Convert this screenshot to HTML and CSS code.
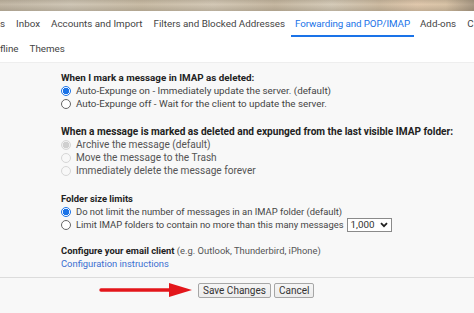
FILE: index.html
```html
<!DOCTYPE html>
<html lang="en">
<head>
  <meta charset="UTF-8" />
  <title>Settings - Forwarding and POP/IMAP</title>
  <link rel="stylesheet" href="styles.css">
</head>
<body>

  <!-- Blurred theme photo -->
  <div class="photo"></div>

  <!-- Settings tabs -->
  <div class="tabs">
    <a href="#" class="tab first">s</a>
    <a href="#" class="tab">Inbox</a>
    <a href="#" class="tab">Accounts and Import</a>
    <a href="#" class="tab">Filters and Blocked Addresses</a>
    <a href="#" class="tab active">Forwarding and POP/IMAP</a>
    <a href="#" class="tab">Add-ons</a>
    <a href="#" class="tab">C</a>
  </div>
  <div class="tabs tabs-second">
    <a href="#" class="tab first">fline</a>
    <a href="#" class="tab">Themes</a>
  </div>

  <!-- IMAP settings -->
  <div class="panel">
    <div class="group">
      <div class="heading">When I mark a message in IMAP as deleted:</div>
      <div class="option"><span class="radio checked"></span>Auto-Expunge on - Immediately update the server. (default)</div>
      <div class="option"><span class="radio"></span>Auto-Expunge off - Wait for the client to update the server.</div>
    </div>

    <div class="group wide">
      <div class="heading">When a message is marked as deleted and expunged from the last visible IMAP folder:</div>
      <div class="option disabled"><span class="radio checked"></span>Archive the message (default)</div>
      <div class="option disabled"><span class="radio"></span>Move the message to the Trash</div>
      <div class="option disabled"><span class="radio"></span>Immediately delete the message forever</div>
    </div>

    <div class="group narrow">
      <div class="heading">Folder size limits</div>
      <div class="option"><span class="radio checked"></span>Do not limit the number of messages in an IMAP folder (default)</div>
      <div class="option"><span class="radio"></span>Limit IMAP folders to contain no more than this many messages
        <span class="select">1,000
          <svg width="8" height="6" viewBox="0 0 8 6"><path d="M1 1.2 L4 4.2 L7 1.2" fill="none" stroke="#222" stroke-width="1.8"/></svg>
        </span>
      </div>
    </div>

    <div class="group narrow last">
      <div class="heading-line"><strong>Configure your email client</strong> (e.g. Outlook, Thunderbird, iPhone)</div>
      <a href="#" class="link">Configuration instructions</a>
    </div>
  </div>

  <!-- Save bar -->
  <div class="actions">
    <svg class="arrow" width="93" height="16" viewBox="0 0 93 16">
      <path d="M2 8 L74 8" stroke="#e3161b" stroke-width="3.4" stroke-linecap="round"/>
      <path d="M70 1 L93 8 L70 15 Z" fill="#e3161b"/>
    </svg>
    <button class="btn">Save Changes</button>
    <button class="btn">Cancel</button>
  </div>

</body>
</html>
```

FILE: styles.css
```css
body {
  margin: 0;
  font-family: Roboto, Arial, sans-serif;
  background: #f8f8f8;
  color: #222;
  overflow: hidden;
}

/* Theme photo strip */
.photo {
  height: 11px;
  background:
    linear-gradient(to bottom, rgba(90,80,60,0.18), rgba(255,255,255,0) 40%, rgba(90,80,60,0.22)),
    linear-gradient(to right, #c2b7a5 0%, #cfc6b6 15%, #c9bca6 30%, #d3c8b6 45%, #c6b8a2 58%, #d5cbb9 70%, #cdbba2 80%, #e0c8ad 88%, #d8c3a7 94%, #a99985 100%);
}

/* Tabs */
.tabs {
  display: flex;
  height: 26px;
  background: white;
  white-space: nowrap;
  overflow: hidden;
}

.tabs-second {
  height: 25px;
}

.tab {
  display: flex;
  align-items: center;
  padding: 0 5.5px;
  color: #444;
  font-size: 9.8px;
  text-decoration: none;
  border-bottom: 2px solid transparent;
}

.tab.first {
  padding-left: 0;
}

.tab.active {
  color: #1a73e8;
  border-bottom-color: #1a73e8;
  padding: 0 4.5px;
  letter-spacing: -0.1px;
}

/* Settings panel */
.panel {
  background: #f8f8f8;
  padding: 8px 0 7px 61px;
  border-top: 1px solid #eeeeee;
  border-bottom: 1px solid #dcdcdc;
  white-space: nowrap;
}

.group {
  margin-bottom: 15px;
  font-size: 9.8px;
  line-height: 13px;
}

.group.wide {
  font-size: 10.1px;
}

.group.narrow {
  font-size: 9.4px;
}

.group.last {
  margin-bottom: 0;
  margin-top: -2px;
}

.heading {
  font-weight: bold;
  color: #222;
}

.heading-line {
  color: #555;
}

.heading-line strong {
  color: #222;
}

.option {
  display: flex;
  align-items: center;
  color: #444;
  height: 13px;
}

.option.disabled {
  color: #555;
}

.radio {
  width: 8px;
  height: 8px;
  border: 1px solid #666;
  border-radius: 50%;
  margin: 0 5px 0 0;
  box-sizing: content-box;
  background: white;
}

.radio.checked {
  border-color: #1a73e8;
  background: radial-gradient(circle, #1a73e8 0 3px, white 3.5px);
}

.disabled .radio {
  border-color: #d6d6d6;
  background: #f8f8f8;
}

.disabled .radio.checked {
  background: radial-gradient(circle, #cfcfcf 0 3px, #f0f0f0 3.5px);
}

.select {
  display: inline-flex;
  align-items: center;
  justify-content: space-between;
  width: 37px;
  height: 12px;
  padding: 0 3px;
  margin-left: 3px;
  border: 1px solid #8a8a8a;
  background: white;
  color: #333;
  font-size: 9.8px;
}

.link {
  color: #3a6fd1;
  text-decoration: none;
}

/* Save bar */
.actions {
  display: flex;
  align-items: center;
  padding: 4px 0 0 99px;
}

.arrow {
  margin-right: 6px;
}

.btn {
  height: 15px;
  padding: 0 4px;
  margin-right: 3px;
  font-family: Roboto, Arial, sans-serif;
  font-size: 10px;
  color: #333;
  background: linear-gradient(#f5f5f5, #ececec);
  border: 1px solid #a6a6a6;
  border-radius: 2px;
  line-height: 13px;
}
```
